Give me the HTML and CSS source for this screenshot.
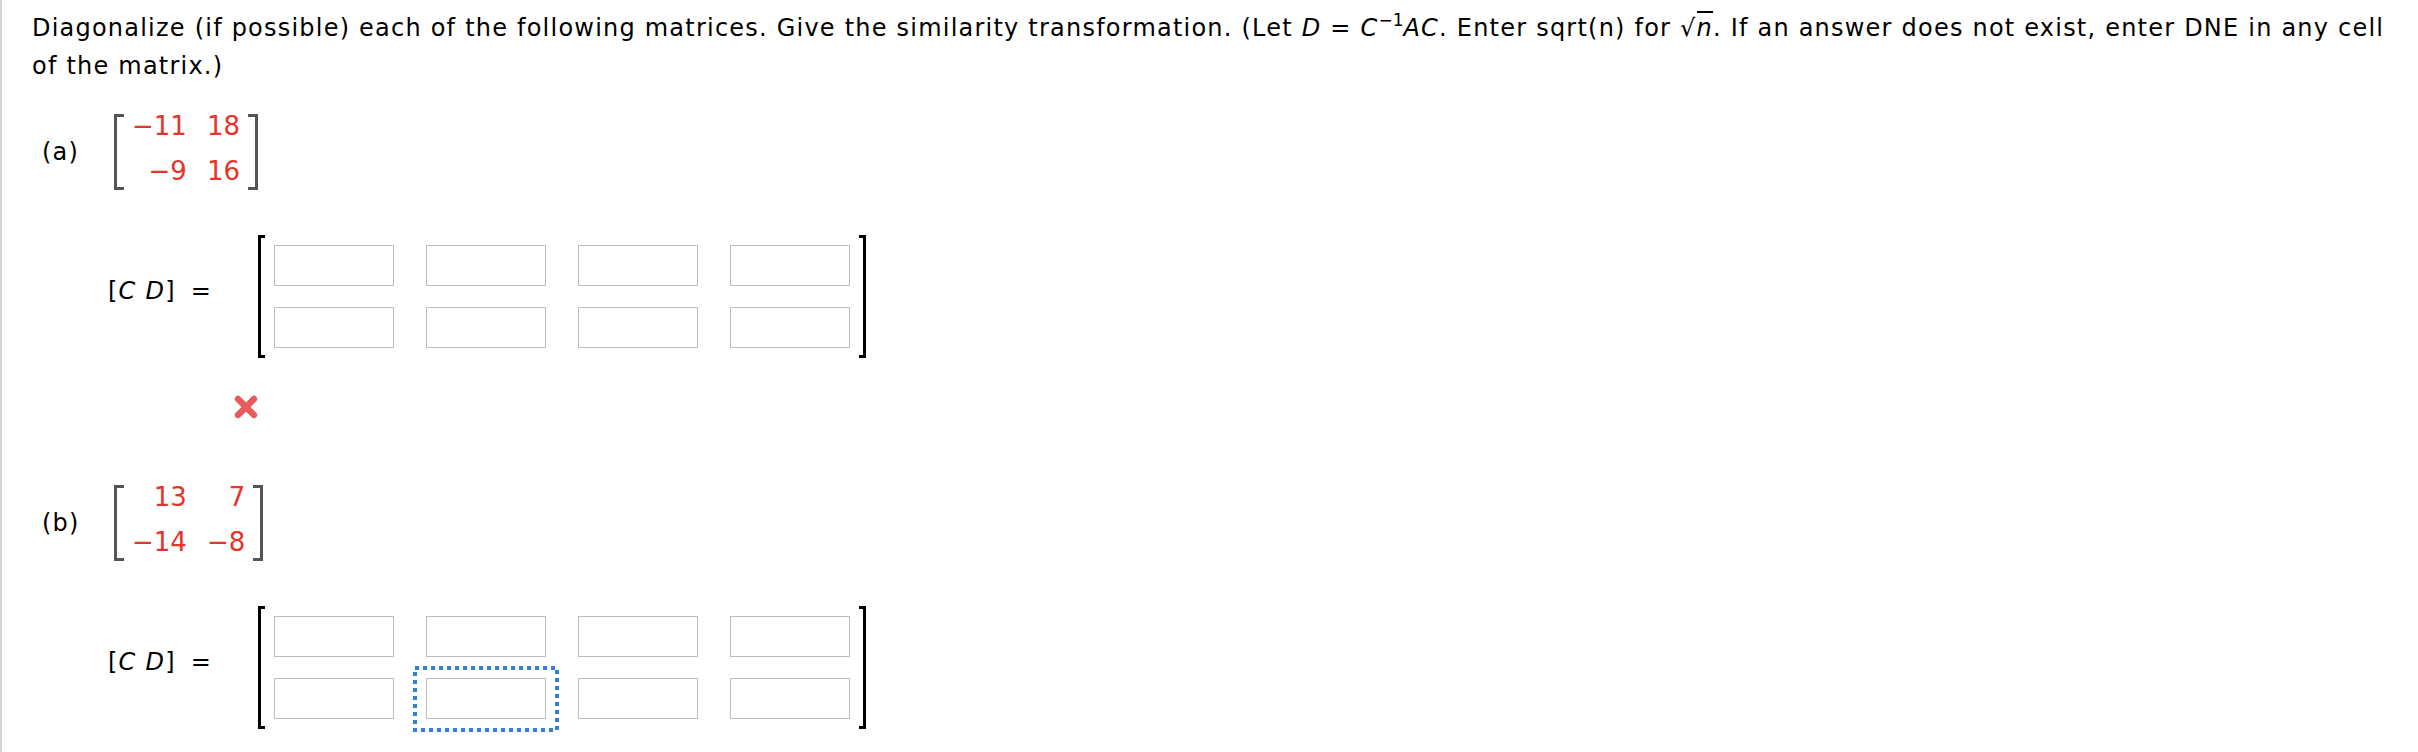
FILE: index.html
```html
<!DOCTYPE html>
<html lang="en">
<head>
<meta charset="utf-8">
<title>Diagonalize</title>
<link rel="stylesheet" href="styles.css">
</head>
<body>
<div class="page">
  <p class="question">Diagonalize (if possible) each of the following matrices. Give the similarity transformation. (Let <i>D</i> = <i>C</i><sup class="sup">−1</sup><i>AC</i>. Enter sqrt(n) for <span class="sqrt">√<span class="rad"><i>n</i></span></span>. If an answer does not exist, enter DNE in any cell of the matrix.)</p>

  <div class="part">
    <span class="part-label">(a)</span>
    <div class="matrix">
      <span class="br br-l"></span>
      <div class="cells">
        <span>−11</span><span>18</span>
        <span>−9</span><span>16</span>
      </div>
      <span class="br br-r"></span>
    </div>
  </div>

  <div class="answer">
    <span class="answer-label">[<i>C</i> <i>D</i>]<span class="eq">=</span></span>
    <div class="bigmat">
      <span class="bbr bbr-l"></span>
      <div class="inputs">
        <input class="cell" type="text"><input class="cell" type="text"><input class="cell" type="text"><input class="cell" type="text">
        <input class="cell" type="text"><input class="cell" type="text"><input class="cell" type="text"><input class="cell" type="text">
      </div>
      <span class="bbr bbr-r"></span>
    </div>
  </div>

  <div class="feedback">
    <svg class="xmark" width="26" height="26" viewBox="0 0 26 26"><path d="M5 5 L21 21 M21 5 L5 21" stroke="#e65b5b" stroke-width="6.5" stroke-linecap="round"/></svg>
  </div>

  <div class="part part-b">
    <span class="part-label">(b)</span>
    <div class="matrix">
      <span class="br br-l"></span>
      <div class="cells">
        <span>13</span><span>7</span>
        <span>−14</span><span>−8</span>
      </div>
      <span class="br br-r"></span>
    </div>
  </div>

  <div class="answer">
    <span class="answer-label">[<i>C</i> <i>D</i>]<span class="eq">=</span></span>
    <div class="bigmat">
      <span class="bbr bbr-l"></span>
      <div class="inputs">
        <input class="cell" type="text"><input class="cell" type="text"><input class="cell" type="text"><input class="cell" type="text">
        <input class="cell" type="text">
        <span class="focus-wrap"><input class="cell" type="text"><svg class="focus-ring" width="146" height="66" viewBox="0 0 146 66"><rect x="2" y="2" width="142" height="62" fill="none" stroke="#2f7fdb" stroke-width="4" stroke-dasharray="4 4"/></svg></span>
        <input class="cell" type="text"><input class="cell" type="text">
      </div>
      <span class="bbr bbr-r"></span>
    </div>
  </div>
</div>
</body>
</html>
```

FILE: styles.css
```css
html, body {
  margin: 0;
  padding: 0;
  background: #fff;
}
body {
  font-family: "DejaVu Sans", Verdana, sans-serif;
  color: #000;
}
.page {
  border-left: 2px solid #d4d4d4;
  min-height: 752px;
  box-sizing: border-box;
  padding: 9px 0 0 30px;
  letter-spacing: 1.22px;
}
.question {
  margin: 0;
  font-size: 24px;
  line-height: 38px;
  width: 2370px;
}
.sup {
  font-size: 17px;
  vertical-align: 10px;
  line-height: 0;
  letter-spacing: 0;
}
.sqrt {
  white-space: nowrap;
}
.rad {
  border-top: 2px solid #000;
  padding-top: 1px;
}

/* given matrices */
.part {
  display: flex;
  align-items: center;
  margin-top: 29px;
  padding-left: 10px;
}
.part-label {
  font-size: 24px;
  width: 72px;
}
.matrix {
  display: flex;
  height: 76px;
}
.br {
  box-sizing: border-box;
  width: 10px;
  border: 3px solid #555;
}
.br-l { border-right: none; }
.br-r { border-left: none; }
.cells {
  align-self: flex-start;
  margin-top: -3px;
  display: grid;
  grid-template-columns: auto auto;
  column-gap: 20px;
  row-gap: 15px;
  padding: 0 8px;
  font-size: 26px;
  line-height: 30px;
  letter-spacing: 0;
  color: #e8332a;
  text-align: right;
}

/* answer matrices */
.answer {
  display: flex;
  align-items: center;
  margin-top: 45px;
  padding-left: 76px;
}
.answer-label {
  width: 150px;
  font-size: 24px;
  margin-bottom: 12px;
}
.eq {
  margin-left: 15px;
}
.bigmat {
  display: flex;
}
.bbr {
  box-sizing: border-box;
  width: 7px;
  border: 3px solid #000;
}
.bbr-l { border-right: none; }
.bbr-r { border-left: none; }
.inputs {
  display: grid;
  grid-template-columns: repeat(4, 120px);
  grid-auto-rows: 41px;
  column-gap: 32px;
  row-gap: 21px;
  margin: 10px 9px;
}
.cell {
  display: block;
  box-sizing: border-box;
  width: 120px;
  height: 41px;
  margin: 0;
  padding: 0;
  border: 1px solid #bdbdbd;
  border-radius: 0;
  background: #fff;
  outline: none;
}
.focus-wrap {
  position: relative;
  display: block;
}
.focus-ring {
  position: absolute;
  left: -13px;
  top: -12px;
  pointer-events: none;
}

/* feedback */
.feedback {
  margin-top: 36px;
  padding-left: 201px;
  height: 26px;
}
.xmark {
  display: block;
  filter: blur(0.4px);
}
.part-b {
  margin-top: 65px;
}
```
